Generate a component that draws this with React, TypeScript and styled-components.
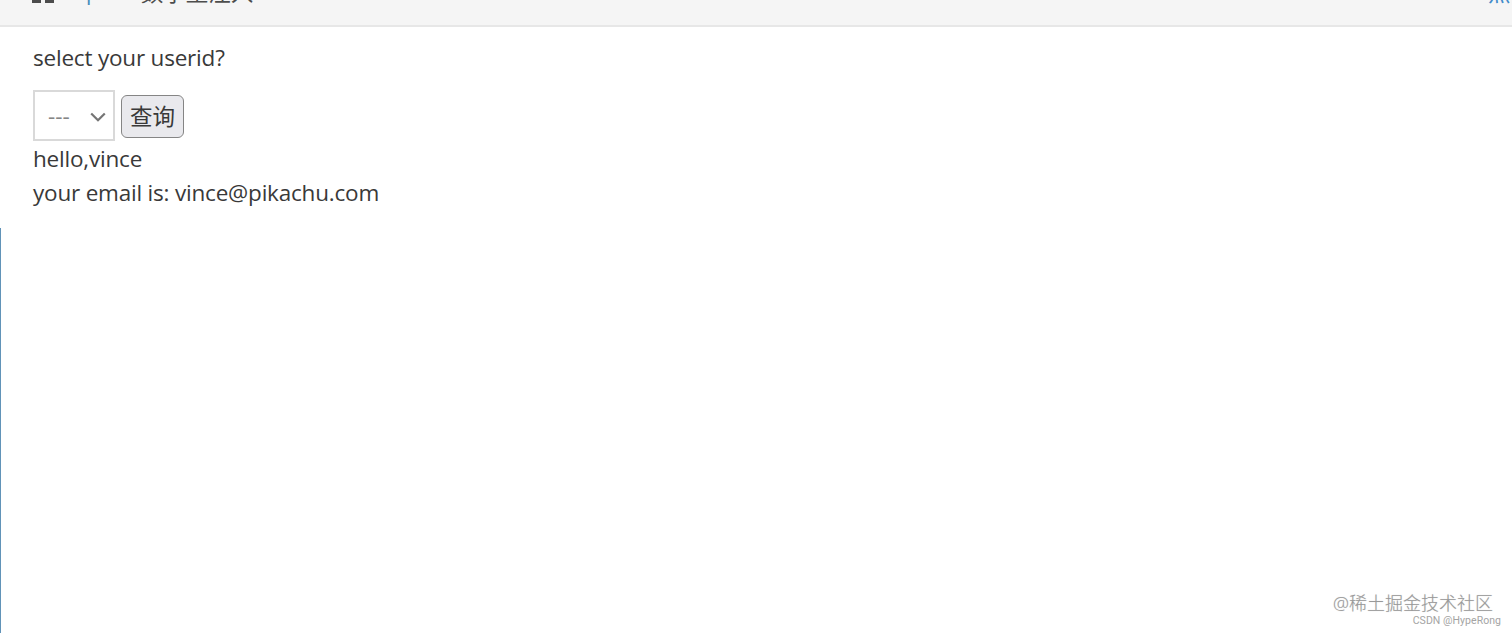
import { FC } from "react"
import styled, { createGlobalStyle } from "styled-components"

const GlobalStyle = createGlobalStyle`
  * {
    box-sizing: border-box;
  }

  body {
    margin: 0;
    background: #fff;
    color: #393939;
    font-family: "Open Sans", "Noto Sans CJK SC", sans-serif;
    font-size: 22.5px;
    line-height: 33.75px;
  }
`

const HomeIcon: FC = () => (
  <svg width="26" height="22" viewBox="0 0 26 22" fill="#4c4c4c">
    <path d="M13 0 0 11h2v11h9v-7h4v7h9V11h2z" />
  </svg>
)

const App: FC = () => {
  return (
    <Page>
      <GlobalStyle />
      <Breadcrumbs>
        <HomeIcon />
        <CrumbLink href="#">sqli</CrumbLink>
        <Separator viewBox="0 0 10 14">
          <path d="M2 1l6 6-6 6" />
        </Separator>
        <Crumb>数字型注入</Crumb>
        <TipLink href="#">点一下提示~</TipLink>
      </Breadcrumbs>
      <Content>
        <Title>select your userid?</Title>
        <Form onSubmit={(e) => e.preventDefault()}>
          <SelectBox>
            <Select name="id" defaultValue="">
              <option value="">---</option>
            </Select>
            <Chevron viewBox="0 0 16 10">
              <path d="M1.2 1.5 8 8.3l6.8-6.8" />
            </Chevron>
          </SelectBox>
          <Submit type="submit">查询</Submit>
        </Form>
        <Result>
          hello,vince
          <br />
          your email is: vince@pikachu.com
        </Result>
      </Content>
      <SideLine />
      <Watermark>
        <Community>@稀土掘金技术社区</Community>
        <Author>CSDN @HypeRong</Author>
      </Watermark>
    </Page>
  )
}

const Page = styled.div`
  position: relative;
  display: flex;
  flex-direction: column;
  height: 633px;
  overflow: hidden;
`

const Breadcrumbs = styled.div`
  flex: none;
  display: flex;
  align-items: flex-end;
  height: 71px;
  margin-top: -44px;
  padding: 0 0 15px 30px;
  background: #f5f5f5;
  border-bottom: 2px solid #e7e7e7;
  white-space: nowrap;

  > svg:first-child {
    margin-bottom: 7px;
  }
`

const CrumbLink = styled.a`
  margin: 0 0 1px 11px;
  color: #4c8fbd;
  text-decoration: none;
`

const Separator = styled.svg`
  width: 10px;
  height: 14px;
  margin: 0 16px 10px 12px;
  fill: none;
  stroke: #b2b6bf;
  stroke-width: 2;
`

const Crumb = styled.span`
  color: #4d4d4d;
`

const TipLink = styled.a`
  width: 24px;
  margin-left: auto;
  color: #428bca;
  text-decoration: none;
`

const Content = styled.div`
  padding: 14px 33px 0;
  letter-spacing: -0.2px;
`

const Title = styled.p`
  margin: 0 0 15px;
`

const Form = styled.form`
  display: flex;
  align-items: center;
  gap: 6px;
  height: 51px;
`

const SelectBox = styled.label`
  position: relative;
  width: 82px;
  height: 51px;
`

const Select = styled.select`
  appearance: none;
  width: 100%;
  height: 100%;
  padding: 2px 0 0 13px;
  border: 2px solid #d9d9d9;
  border-radius: 0;
  background: #fff;
  color: #858585;
  font: inherit;
`

const Chevron = styled.svg`
  position: absolute;
  top: 22px;
  right: 9px;
  width: 16px;
  height: 10px;
  fill: none;
  stroke: #757575;
  stroke-width: 2.2;
  pointer-events: none;
`

const Submit = styled.button`
  width: 63px;
  height: 43px;
  margin-top: 2px;
  padding: 2px 0 0;
  border: 1.5px solid #858585;
  border-radius: 6px;
  background: #e9e9ed;
  color: #393939;
  font: inherit;
  letter-spacing: 0;
`

const Result = styled.p`
  margin: 1px 0 0;
`

const SideLine = styled.div`
  width: 1px;
  flex: 1;
  margin-top: 19px;
  background: #6193b8;
`

const Watermark = styled.div`
  position: absolute;
  right: 11px;
  bottom: 6px;
  display: flex;
  flex-direction: column;
  align-items: flex-end;
`

const Community = styled.span`
  margin: 0 8px 1px 0;
  color: #999;
  font-size: 18px;
  font-weight: 300;
  line-height: 22px;
  text-shadow: 0 0 1px #ccc;
`

const Author = styled.span`
  color: #a4a4a4;
  font-family: Roboto, sans-serif;
  font-size: 10.5px;
  letter-spacing: 0.05px;
  line-height: 12px;
`

export default App
